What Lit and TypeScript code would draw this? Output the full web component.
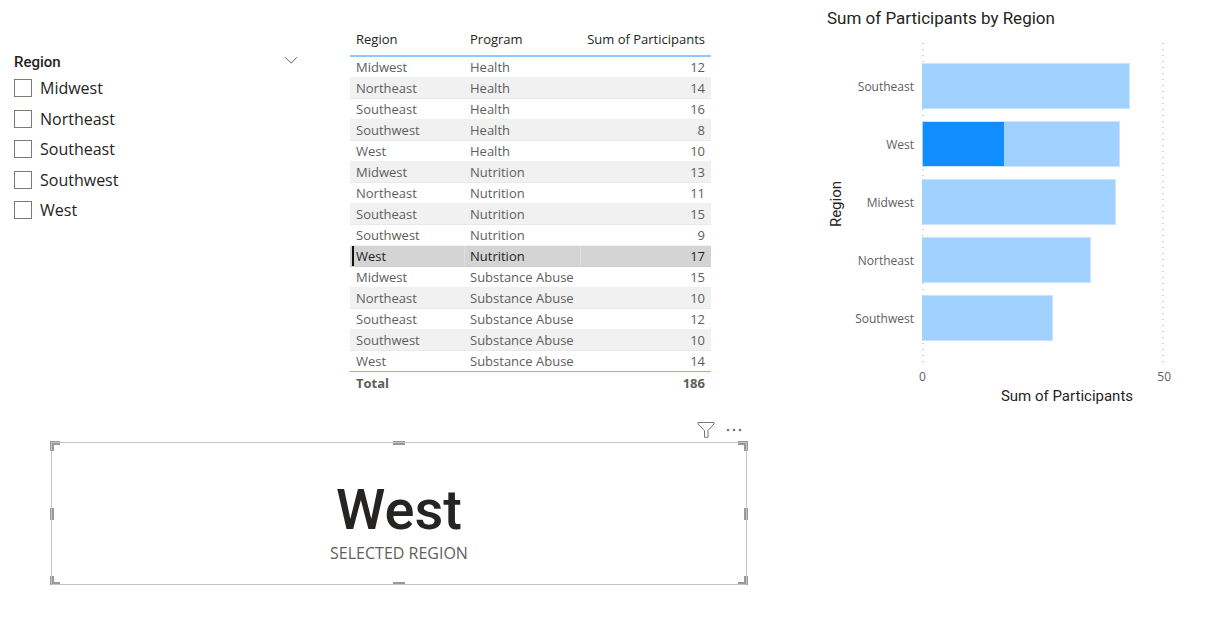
import { LitElement, html, css, svg } from "lit";
import { customElement, property, state } from "lit/decorators.js";
import { classMap } from "lit/directives/class-map.js";

interface Row {
  region: string;
  program: string;
  count: number;
}

const rows: Row[] = [
  { region: "Midwest", program: "Health", count: 12 },
  { region: "Northeast", program: "Health", count: 14 },
  { region: "Southeast", program: "Health", count: 16 },
  { region: "Southwest", program: "Health", count: 8 },
  { region: "West", program: "Health", count: 10 },
  { region: "Midwest", program: "Nutrition", count: 13 },
  { region: "Northeast", program: "Nutrition", count: 11 },
  { region: "Southeast", program: "Nutrition", count: 15 },
  { region: "Southwest", program: "Nutrition", count: 9 },
  { region: "West", program: "Nutrition", count: 17 },
  { region: "Midwest", program: "Substance Abuse", count: 15 },
  { region: "Northeast", program: "Substance Abuse", count: 10 },
  { region: "Southeast", program: "Substance Abuse", count: 12 },
  { region: "Southwest", program: "Substance Abuse", count: 10 },
  { region: "West", program: "Substance Abuse", count: 14 },
];

const regions = ["Midwest", "Northeast", "Southeast", "Southwest", "West"];

@customElement("region-slicer")
export class RegionSlicer extends LitElement {
  static styles = css`
    :host {
      display: block;
      padding-top: 50px;
    }
    .slicer {
      margin: 0;
      padding: 0;
      border: 0;
      min-width: 0;
    }
    .head {
      display: flex;
      justify-content: space-between;
      align-items: center;
      height: 24px;
    }
    .title {
      font: 500 15px/24px Roboto, sans-serif;
      color: #252423;
    }
    .toggle {
      display: flex;
      padding: 0;
      margin: 0 2px 4px 0;
      border: 0;
      background: none;
    }
    .items {
      display: flex;
      flex-direction: column;
      justify-content: space-between;
      height: 150px;
    }
    .item {
      display: flex;
      align-items: center;
      gap: 8px;
      font: 16px/28px "Open Sans", "Noto Sans", sans-serif;
      color: #252423;
    }
    .box {
      appearance: none;
      box-sizing: border-box;
      width: 18px;
      height: 18px;
      margin: 0;
      border: 1px solid #7d7871;
      background: #fff;
    }
    .box:checked {
      background: #605e5c;
    }
  `;

  render() {
    return html`
      <fieldset class="slicer" aria-labelledby="title">
        <div class="head">
          <span class="title" id="title">Region</span>
          <button class="toggle" aria-label="Collapse">
            <svg width="14" height="9" viewBox="0 0 14 9" fill="none" stroke="#5f6b66">
              <path d="M1 1.2 L7 7.2 L13 1.2" />
            </svg>
          </button>
        </div>
        <div class="items">
          ${regions.map(
            (r) => html`<label class="item"><input class="box" type="checkbox" />${r}</label>`
          )}
        </div>
      </fieldset>
    `;
  }
}

@customElement("participant-table")
export class ParticipantTable extends LitElement {
  @property({ type: Number }) selected = -1;

  static styles = css`
    :host {
      display: block;
      padding-top: 23px;
    }
    .grid {
      width: 100%;
      table-layout: fixed;
      border-collapse: separate;
      border-spacing: 0;
      font: 13px/20px "Open Sans", "Noto Sans", sans-serif;
      color: #605e5c;
    }
    .region {
      width: 114px;
    }
    .program {
      width: 116px;
    }
    th,
    td {
      box-sizing: border-box;
      padding: 0 6px;
      text-align: left;
      white-space: nowrap;
    }
    thead th {
      height: 34px;
      border-bottom: 2px solid #8fc8fb;
      font-weight: 400;
      color: #252423;
    }
    tbody td {
      height: 21px;
      line-height: 20px;
      border-bottom: 1px solid #f0f0f0;
    }
    tbody tr:nth-child(even) td {
      background: #f1f1f1;
      border-bottom-color: #e9e9e9;
    }
    tbody tr:last-child td {
      border-bottom-color: #6bb8fb;
    }
    tbody tr.selected td {
      background: #d4d4d4;
      border-bottom-color: #cccccc;
      color: #252423;
    }
    tbody tr.selected td + td {
      box-shadow: inset 1px 0 #dedede;
    }
    tbody tr.selected td:first-child {
      box-shadow: inset 2px 0 #d4d4d4, inset 4px 0 #111;
    }
    .num {
      text-align: right;
    }
    tfoot th {
      height: 21px;
      font-weight: 700;
    }
  `;

  render() {
    const total = rows.reduce((sum, r) => sum + r.count, 0);
    return html`
      <table class="grid">
        <colgroup>
          <col class="region" />
          <col class="program" />
          <col />
        </colgroup>
        <thead>
          <tr>
            <th>Region</th>
            <th>Program</th>
            <th class="num">Sum of Participants</th>
          </tr>
        </thead>
        <tbody>
          ${rows.map(
            (r, i) => html`<tr class=${classMap({ selected: i === this.selected })}>
              <td>${r.region}</td>
              <td>${r.program}</td>
              <td class="num">${r.count}</td>
            </tr>`
          )}
        </tbody>
        <tfoot>
          <tr>
            <th>Total</th>
            <th></th>
            <th class="num">${total}</th>
          </tr>
        </tfoot>
      </table>
    `;
  }
}

@customElement("region-chart")
export class RegionChart extends LitElement {
  @property({ type: Number }) selected = -1;

  static styles = css`
    :host {
      display: block;
      padding-top: 6px;
      color: #252423;
    }
    .title {
      margin: 0 0 13px;
      font: 400 17px/24px Roboto, sans-serif;
      white-space: nowrap;
    }
    .chart {
      display: grid;
      grid-template-columns: 18px 69px 1fr;
      padding-right: 40px;
    }
    .ytitle {
      align-self: center;
      writing-mode: vertical-rl;
      transform: rotate(180deg);
      font: 400 15px/18px Roboto, sans-serif;
    }
    .names,
    .plot {
      display: grid;
      grid-auto-rows: 46px;
      row-gap: 12px;
      padding: 20px 0 25px;
    }
    .names {
      font: 12px/48px "Open Sans", "Noto Sans", sans-serif;
      color: #605e5c;
      text-align: right;
    }
    .plot {
      margin-left: 8px;
      background:
        repeating-linear-gradient(#d0d0d0 0 1px, transparent 1px 6px) left / 2px 100% no-repeat,
        repeating-linear-gradient(#d0d0d0 0 1px, transparent 1px 6px) right / 2px 100% no-repeat;
    }
    .bar {
      box-sizing: border-box;
      display: flex;
      background: #a0d1ff;
      border: 1px solid #c8e4ff;
      border-left-color: #a0d1ff;
    }
    .part {
      background: #118dff;
    }
    .ticks {
      grid-column: 3;
      display: flex;
      justify-content: space-between;
      margin: 0 -7px 0 5px;
      padding-top: 1px;
      font: 12px/20px "Open Sans", "Noto Sans", sans-serif;
      color: #605e5c;
    }
    .xtitle {
      grid-column: 3;
      margin: 0 -40px 0 16px;
      text-align: center;
      font: 400 15px/18px Roboto, sans-serif;
      white-space: nowrap;
    }
  `;

  render() {
    const picked = rows[this.selected];
    const bars = regions
      .map((name) => ({
        name,
        total: rows.filter((r) => r.region === name).reduce((s, r) => s + r.count, 0),
        part: picked && picked.region === name ? picked.count : 0,
      }))
      .sort((a, b) => b.total - a.total);
    return html`
      <h2 class="title">Sum of Participants by Region</h2>
      <div class="chart">
        <div class="ytitle">Region</div>
        <div class="names">${bars.map((b) => html`<span>${b.name}</span>`)}</div>
        <div class="plot">
          ${bars.map(
            (b) => html`<div class="bar" style="width:${(b.total / 50) * 100}%">
              ${b.part
                ? html`<div class="part" style="width:${(b.part / b.total) * 100}%"></div>`
                : null}
            </div>`
          )}
        </div>
        <div class="ticks"><span>0</span><span>50</span></div>
        <div class="xtitle">Sum of Participants</div>
      </div>
    `;
  }
}

@customElement("region-card")
export class RegionCard extends LitElement {
  @property() value = "";

  static styles = css`
    :host {
      display: block;
    }
    .actions {
      display: flex;
      justify-content: flex-end;
      align-items: center;
      gap: 11px;
      height: 24px;
      padding-right: 5px;
    }
    .action {
      display: flex;
      padding: 0;
      border: 0;
      background: none;
    }
    .card {
      position: relative;
      box-sizing: border-box;
      min-height: 143px;
      padding: 35px 0 20px;
      border: 1px solid #c4c4c4;
      text-align: center;
    }
    .value {
      font: 500 56px/64px Roboto, sans-serif;
      color: #252423;
    }
    .label {
      font: 16px/22px "Open Sans", "Noto Sans", sans-serif;
      color: #605e5c;
    }
    .handle {
      position: absolute;
      box-sizing: border-box;
    }
    .n,
    .s {
      left: calc(50% - 6px);
      width: 12px;
      height: 4px;
      border-top: 1px solid #999;
      border-bottom: 2px solid #999;
      background: #c4c4c4;
    }
    .e,
    .w {
      top: calc(50% - 6px);
      width: 4px;
      height: 12px;
      border-left: 1px solid #999;
      border-right: 2px solid #999;
      background: #c4c4c4;
    }
    .n {
      top: -2px;
    }
    .s {
      bottom: -2px;
      transform: rotate(180deg);
    }
    .w {
      left: -2px;
    }
    .e {
      right: -2px;
      transform: rotate(180deg);
    }
    .corner {
      width: 10px;
      height: 10px;
    }
    .nw {
      left: -2px;
      top: -2px;
    }
    .ne {
      right: -2px;
      top: -2px;
      transform: rotate(90deg);
    }
    .se {
      right: -2px;
      bottom: -2px;
      transform: rotate(180deg);
    }
    .sw {
      left: -2px;
      bottom: -2px;
      transform: rotate(270deg);
    }
  `;

  render() {
    return html`
      <div class="actions">
        <button class="action" aria-label="Filters">
          <svg width="18" height="16" viewBox="0 0 18 16" fill="none" stroke="#777">
            <path d="M1 0.5 H17 V2 L11 8.5 V15.3 H7.5 V8.5 L1 2 Z" />
          </svg>
        </button>
        <button class="action" aria-label="More options">
          <svg width="16" height="4" viewBox="0 0 16 4" fill="#777">
            <circle cx="2" cy="2" r="1.3" />
            <circle cx="8" cy="2" r="1.3" />
            <circle cx="14" cy="2" r="1.3" />
          </svg>
        </button>
      </div>
      <div class="card">
        <div class="value">${this.value}</div>
        <div class="label">SELECTED REGION</div>
        ${["n", "e", "s", "w"].map((d) => html`<span class="handle ${d}"></span>`)}
        ${["nw", "ne", "se", "sw"].map(
          (d) => html`<svg class="handle corner ${d}" viewBox="0 0 10 10">
            ${svg`<path d="M0 0H10V4H4V10H0Z" fill="#999" /><path d="M1.5 10V1.5H10" fill="none" stroke="#c4c4c4" />`}
          </svg>`
        )}
      </div>
    `;
  }
}

@customElement("app-root")
export class AppRoot extends LitElement {
  @state() selected = 9;

  static styles = css`
    :host {
      display: block;
      background: #fff;
    }
    .page {
      display: grid;
      grid-template-columns: 733fr 377fr;
      column-gap: 80px;
      padding: 0 24px 0 14px;
    }
    .top {
      display: grid;
      grid-template-columns: 286fr 361fr;
      column-gap: 50px;
      padding-right: 36px;
    }
    .card {
      margin: 25px 0 0 37px;
    }
  `;

  render() {
    return html`
      <main class="page">
        <section>
          <div class="top">
            <region-slicer></region-slicer>
            <participant-table .selected=${this.selected}></participant-table>
          </div>
          <region-card class="card" .value=${rows[this.selected].region}></region-card>
        </section>
        <region-chart .selected=${this.selected}></region-chart>
      </main>
    `;
  }
}
